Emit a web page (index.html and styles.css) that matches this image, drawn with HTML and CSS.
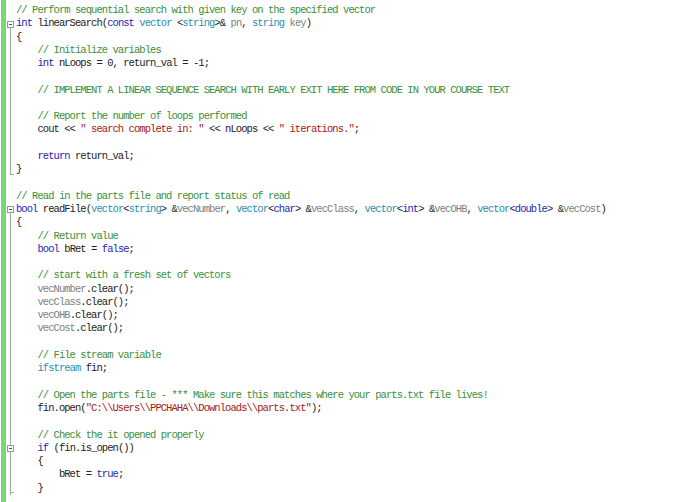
FILE: index.html
```html
<!DOCTYPE html>
<html>
<head>
<meta charset="utf-8">
<link rel="stylesheet" href="styles.css">
</head>
<body>
<div class="editor">
  <div class="changebar"></div>
  <div class="code">
    <div class="ln"><span class="g"></span><span class="t"><span class="c">// Perform sequential search with given key on the specified vector</span></span></div>
    <div class="ln"><span class="g fold"><span class="box"></span><span class="down"></span></span><span class="t"><span class="k">int</span> linearSearch(<span class="k">const</span> <span class="ty">vector</span> &lt;<span class="ty">string</span>&gt;&amp; <span class="p">pn</span>, <span class="ty">string</span> <span class="p">key</span>)</span></div>
    <div class="ln"><span class="g in"></span><span class="t">{</span></div>
    <div class="ln"><span class="g in"></span><span class="t">    <span class="c">// Initialize variables</span></span></div>
    <div class="ln"><span class="g in"></span><span class="t">    <span class="k">int</span> nLoops = 0, return_val = -1;</span></div>
    <div class="ln"><span class="g in"></span><span class="t"> </span></div>
    <div class="ln"><span class="g in"></span><span class="t">    <span class="c">// IMPLEMENT A LINEAR SEQUENCE SEARCH WITH EARLY EXIT HERE FROM CODE IN YOUR COURSE TEXT</span></span></div>
    <div class="ln"><span class="g in"></span><span class="t"> </span></div>
    <div class="ln"><span class="g in"></span><span class="t">    <span class="c">// Report the number of loops performed</span></span></div>
    <div class="ln"><span class="g in"></span><span class="t">    cout &lt;&lt; <span class="s">" search complete in: "</span> &lt;&lt; nLoops &lt;&lt; <span class="s">" iterations."</span>;</span></div>
    <div class="ln"><span class="g in"></span><span class="t"> </span></div>
    <div class="ln"><span class="g in"></span><span class="t">    <span class="k">return</span> return_val;</span></div>
    <div class="ln"><span class="g end"></span><span class="t">}</span></div>
    <div class="ln"><span class="g"></span><span class="t"> </span></div>
    <div class="ln"><span class="g"></span><span class="t"><span class="c">// Read in the parts file and report status of read</span></span></div>
    <div class="ln"><span class="g fold"><span class="box"></span><span class="down"></span></span><span class="t"><span class="k">bool</span> readFile(<span class="ty">vector</span>&lt;<span class="ty">string</span>&gt; &amp;<span class="p">vecNumber</span>, <span class="ty">vector</span>&lt;<span class="k">char</span>&gt; &amp;<span class="p">vecClass</span>, <span class="ty">vector</span>&lt;<span class="k">int</span>&gt; &amp;<span class="p">vecOHB</span>, <span class="ty">vector</span>&lt;<span class="k">double</span>&gt; &amp;<span class="p">vecCost</span>)</span></div>
    <div class="ln"><span class="g in"></span><span class="t">{</span></div>
    <div class="ln"><span class="g in"></span><span class="t">    <span class="c">// Return value</span></span></div>
    <div class="ln"><span class="g in"></span><span class="t">    <span class="k">bool</span> bRet = <span class="k">false</span>;</span></div>
    <div class="ln"><span class="g in"></span><span class="t"> </span></div>
    <div class="ln"><span class="g in"></span><span class="t">    <span class="c">// start with a fresh set of vectors</span></span></div>
    <div class="ln"><span class="g in"></span><span class="t">    <span class="p">vecNumber</span>.clear();</span></div>
    <div class="ln"><span class="g in"></span><span class="t">    <span class="p">vecClass</span>.clear();</span></div>
    <div class="ln"><span class="g in"></span><span class="t">    <span class="p">vecOHB</span>.clear();</span></div>
    <div class="ln"><span class="g in"></span><span class="t">    <span class="p">vecCost</span>.clear();</span></div>
    <div class="ln"><span class="g in"></span><span class="t"> </span></div>
    <div class="ln"><span class="g in"></span><span class="t">    <span class="c">// File stream variable</span></span></div>
    <div class="ln"><span class="g in"></span><span class="t">    <span class="ty">ifstream</span> fin;</span></div>
    <div class="ln"><span class="g in"></span><span class="t"> </span></div>
    <div class="ln"><span class="g in"></span><span class="t">    <span class="c">// Open the parts file - *** Make sure this matches where your parts.txt file lives!</span></span></div>
    <div class="ln"><span class="g in"></span><span class="t">    fin.open(<span class="s">"C:\\Users\\PPCHAHA\\Downloads\\parts.txt"</span>);</span></div>
    <div class="ln"><span class="g in"></span><span class="t"> </span></div>
    <div class="ln"><span class="g in"></span><span class="t">    <span class="c">// Check the it opened properly</span></span></div>
    <div class="ln"><span class="g fold inner"><span class="box"></span><span class="down"></span></span><span class="t">    <span class="k">if</span> (fin.is_open())</span></div>
    <div class="ln"><span class="g in"></span><span class="t">    {</span></div>
    <div class="ln"><span class="g in"></span><span class="t">        bRet = <span class="k">true</span>;</span></div>
    <div class="ln"><span class="g in tick"></span><span class="t">    }</span></div>
  </div>
</div>
</body>
</html>
```
FILE: styles.css
```css
html, body {
  margin: 0;
  padding: 0;
  background: #ffffff;
}

.editor {
  display: flex;
  height: 502px;
  overflow: hidden;
  background: #ffffff;
}

.changebar {
  width: 5px;
  margin-left: 1px;
  background: #72dc72;
  flex: none;
}

.code {
  flex: 1;
  padding-top: 4px;
  font-family: "Liberation Mono", "DejaVu Sans Mono", monospace;
  font-size: 10.5px;
  letter-spacing: -0.94px;
  color: #222222;
}

.ln {
  display: flex;
  height: 13.28px;
  line-height: 13.28px;
}

.g {
  width: 10px;
  flex: none;
  display: flex;
  flex-direction: column;
  align-items: flex-start;
}

.t {
  white-space: pre;
}

.in::before,
.end::before {
  content: "";
  display: block;
  margin-left: 4px;
  width: 0;
  border-left: 1px solid #a5a5a5;
}

.in::before {
  height: 100%;
}

.end::before {
  height: 10.5px;
  width: 3px;
  border-bottom: 1px solid #a5a5a5;
}

.tick {
  position: relative;
}

.tick::after {
  content: "";
  display: block;
  position: absolute;
  left: 5px;
  top: 10.5px;
  width: 3px;
  border-bottom: 1px solid #a5a5a5;
}

.fold .box {
  margin-top: 3.4px;
  margin-left: 1px;
  width: 5px;
  height: 5px;
  border: 1px solid #9a9a9a;
  background: #ffffff;
  display: flex;
  align-items: center;
  justify-content: center;
  flex: none;
}

.fold .box::before {
  content: "";
  width: 3px;
  border-top: 1px solid #555555;
}

.fold .down {
  flex: 1;
  margin-left: 4px;
  border-left: 1px solid #a5a5a5;
}

.fold.inner {
  position: relative;
}

.fold.inner::before {
  content: "";
  position: absolute;
  left: 4px;
  top: 0;
  height: 3.4px;
  border-left: 1px solid #a5a5a5;
}

.c { color: #3a8f3a; }
.k { color: #2626b0; }
.ty { color: #2b8fad; }
.s { color: #a32020; }
.p { color: #808080; }
```
